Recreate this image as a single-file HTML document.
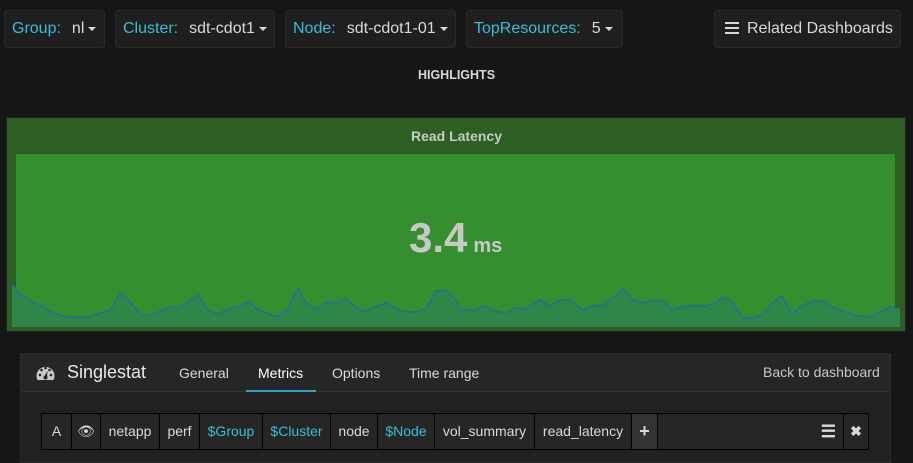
<!DOCTYPE html>
<html><head><style>
*{box-sizing:border-box;margin:0;padding:0}
body{width:913px;height:454px;background:#161616;font-family:"Liberation Sans",sans-serif;position:relative;overflow:hidden;color:#d8d9da}
.btn{position:absolute;top:10px;height:38px;background:#1f1f20;border:1px solid #2a2a2a;border-radius:3px;font-size:16px;line-height:36px;padding-left:7px;color:#d8d9da;white-space:nowrap}
.l{color:#31c0d8;margin-right:11px}
.c{display:inline-block;border-left:4px solid transparent;border-right:4px solid transparent;border-top:4px solid #d8d9da;vertical-align:middle;margin-left:4px}
.abs{position:absolute}
.q{position:absolute;top:413px;height:37px;border:1px solid #000;background:#262626;font-size:14px;line-height:35px;text-align:center;color:#d8d9da}
</style></head><body>
<div class="btn" style="left:4px;width:101px"><span class="l">Group:</span>nl<span class="c"></span></div>
<div class="btn" style="left:115px;width:160px"><span class="l">Cluster:</span>sdt-cdot1<span class="c"></span></div>
<div class="btn" style="left:285px;width:171px"><span class="l">Node:</span>sdt-cdot1-01<span class="c"></span></div>
<div class="btn" style="left:466px;width:157px"><span class="l">TopResources:</span>5<span class="c"></span></div>
<div class="btn" style="left:714px;width:187px;padding-left:10px"><span style="display:inline-block;width:14px;height:12px;border-top:2px solid #d8d9da;border-bottom:2px solid #d8d9da;vertical-align:-1px;margin-right:8px;position:relative"><span style="position:absolute;left:0;right:0;top:3px;height:2px;background:#d8d9da"></span></span>Related Dashboards</div>
<div class="abs" style="left:0;width:913px;top:68px;text-align:center;font-size:12.5px;font-weight:bold;color:#d8d9da">HIGHLIGHTS</div>
<div class="abs" style="left:6px;top:117px;width:900px;height:215px;background:#2d5f25;border:1px solid #222"></div>
<div class="abs" style="left:0;width:913px;top:128px;text-align:center;font-size:14px;font-weight:bold;color:#c8c8c8">Read Latency</div>
<div class="abs" style="left:16px;top:154px;width:879px;height:173px;background:#368f2e"></div>
<svg class="abs" style="left:0;top:0" width="913" height="454"><path d="M12,285 22,296 40,305 52,312 62,316 72,317 90,317 100,313 110,311 120,294 128,299 140,314 150,316 160,311 170,307 180,308 198,295 208,310 218,314 228,309 238,307 248,302 258,309 268,314 278,317 288,309 298,288 306,303 316,310 326,302 336,303 346,298 356,308 366,311 376,307 386,303 396,309 406,312 416,312 426,309 436,291 446,291 456,300 460,310 475,310 485,306 495,311 505,313 515,308 525,309 540,300 550,306 560,300 570,300 583,310 592,306 605,305 623,289 633,300 643,303 653,300 663,301 673,310 683,306 705,306 717,303 722,297 733,302 742,318 752,318 762,315 772,303 782,296 792,314 802,306 812,301 822,301 832,307 848,313 858,316 870,317 890,307 900,309 L900,327 12,327Z" fill="#2e8747"/><path d="M12,285 22,296 40,305 52,312 62,316 72,317 90,317 100,313 110,311 120,294 128,299 140,314 150,316 160,311 170,307 180,308 198,295 208,310 218,314 228,309 238,307 248,302 258,309 268,314 278,317 288,309 298,288 306,303 316,310 326,302 336,303 346,298 356,308 366,311 376,307 386,303 396,309 406,312 416,312 426,309 436,291 446,291 456,300 460,310 475,310 485,306 495,311 505,313 515,308 525,309 540,300 550,306 560,300 570,300 583,310 592,306 605,305 623,289 633,300 643,303 653,300 663,301 673,310 683,306 705,306 717,303 722,297 733,302 742,318 752,318 762,315 772,303 782,296 792,314 802,306 812,301 822,301 832,307 848,313 858,316 870,317 890,307 900,309" fill="none" stroke="#1f6fa0" stroke-width="1.5"/></svg>
<div class="abs" style="left:409px;top:214px;font-size:42px;font-weight:bold;color:#c8c8c8;white-space:nowrap">3.4<span style="font-size:20px;margin-left:6px">ms</span></div>
<div class="abs" style="left:20px;top:353px;width:871px;height:110px;background:#212121;border:1px solid #2c2c2c"></div>
<div class="abs" style="left:21px;top:354px;width:869px;height:38px;background:#262626;border-bottom:1px solid #333"></div>
<svg class="abs" style="left:36px;top:365px" width="19" height="16" viewBox="0 0 19 16"><path d="M1.5,15 A9,9 0 1 1 17.5,15 Z" fill="#c8c8c8"/><g fill="#262626"><circle cx="4" cy="10" r="1.3"/><circle cx="5.5" cy="5" r="1.3"/><circle cx="9.5" cy="3" r="1.3"/><circle cx="13.5" cy="5" r="1.3"/><circle cx="15" cy="10" r="1.3"/><path d="M8,12 L11.5,6 L11,12Z"/><circle cx="9.5" cy="12.5" r="2"/></g></svg>
<div class="abs" style="left:67px;top:362px;font-size:18px;color:#e8e8e8">Singlestat</div>
<div class="abs" style="left:179px;top:365px;font-size:14px">General</div>
<div class="abs" style="left:258px;top:365px;font-size:14px;color:#fff">Metrics</div>
<div class="abs" style="left:246px;top:390px;width:70px;height:2px;background:#33a2c7"></div>
<div class="abs" style="left:332px;top:365px;font-size:14px">Options</div>
<div class="abs" style="left:409px;top:365px;font-size:14px">Time range</div>
<div class="abs" style="left:763px;top:364px;font-size:14px;color:#c8c8c8">Back to dashboard</div>
<div class="q" style="left:41px;width:31px">A</div>
<div class="q" style="left:71px;width:30px">👁</div>
<div class="q" style="left:100px;width:60px">netapp</div>
<div class="q" style="left:159px;width:41px">perf</div>
<div class="q" style="left:199px;width:64px;color:#31c0d8">$Group</div>
<div class="q" style="left:262px;width:69px;color:#31c0d8">$Cluster</div>
<div class="q" style="left:330px;width:48px">node</div>
<div class="q" style="left:377px;width:58px;color:#31c0d8">$Node</div>
<div class="q" style="left:434px;width:101px">vol_summary</div>
<div class="q" style="left:534px;width:98px">read_latency</div>
<div class="q" style="left:631px;width:27px;background:#333;font-weight:bold;font-size:18px">+</div>
<div class="q" style="left:657px;width:187px;text-align:right;padding-right:7px;font-size:17px;font-weight:bold">☰</div>
<div class="q" style="left:843px;width:26px;font-weight:bold">✖</div>
</body></html>
